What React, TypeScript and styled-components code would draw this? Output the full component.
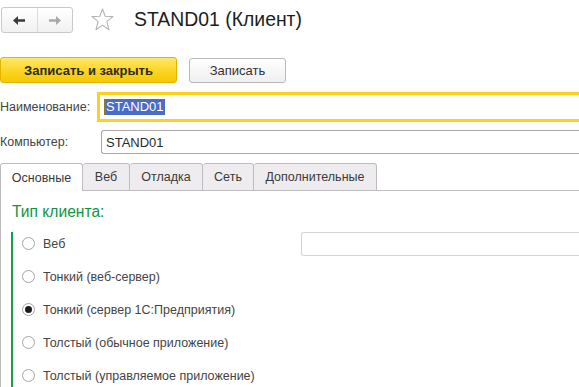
import styled, { createGlobalStyle } from "styled-components";

const GlobalStyle = createGlobalStyle`
  html, body {
    margin: 0;
    padding: 0;
    background: #ffffff;
  }
  body {
    font-family: "Liberation Sans", Arial, sans-serif;
    overflow: hidden;
  }
`;

const tabs = [
  { title: "Основные", width: 83 },
  { title: "Веб", width: 47 },
  { title: "Отладка", width: 73 },
  { title: "Сеть", width: 51 },
  { title: "Дополнительные", width: 123 },
];

const clientTypes = [
  { label: "Веб", checked: false, withField: true },
  { label: "Тонкий (веб-сервер)", checked: false },
  { label: "Тонкий (сервер 1С:Предприятия)", checked: true },
  { label: "Толстый (обычное приложение)", checked: false },
  { label: "Толстый (управляемое приложение)", checked: false },
];

const ArrowLeft = ({ color }: { color: string }) => (
  <svg width="12" height="9" viewBox="0 0 12 9">
    <path d="M0 4.5 L5 0 L5 3.2 L12 3.2 L12 5.8 L5 5.8 L5 9 Z" fill={color} />
  </svg>
);

const ArrowRight = ({ color }: { color: string }) => (
  <svg width="12" height="9" viewBox="0 0 12 9">
    <path d="M12 4.5 L7 0 L7 3.2 L0 3.2 L0 5.8 L7 5.8 L7 9 Z" fill={color} />
  </svg>
);

const StarIcon = () => (
  <svg width="23" height="23" viewBox="0 0 23 23">
    <path
      d="M11.5 1 L14.2 8.3 L22 8.6 L15.9 13.4 L18 21.8 L11.5 17.1 L5 21.8 L7.1 13.4 L1 8.6 L8.8 8.3 Z"
      fill="none"
      stroke="#b4b4b4"
      strokeWidth="1.1"
      strokeLinejoin="round"
    />
  </svg>
);

export default function App() {
  return (
    <Page>
      <GlobalStyle />
      <Header>
        <NavGroup>
          <NavButton>
            <ArrowLeft color="#3a3a3a" />
          </NavButton>
          <NavButton $divider>
            <ArrowRight color="#a8a8a8" />
          </NavButton>
        </NavGroup>
        <StarBox>
          <StarIcon />
        </StarBox>
        <Title>STAND01 (Клиент)</Title>
      </Header>

      <Toolbar>
        <PrimaryButton>Записать и закрыть</PrimaryButton>
        <Button>Записать</Button>
      </Toolbar>

      <FormRow $focused>
        <Label $width={97}>Наименование:</Label>
        <FocusFrame>
          <Field $plain>
            <Selected>STAND01</Selected>
          </Field>
        </FocusFrame>
      </FormRow>

      <FormRow>
        <Label $width={101}>Компьютер:</Label>
        <Field>STAND01</Field>
      </FormRow>

      <TabBar>
        {tabs.map((t, i) => (
          <Tab key={t.title} $active={i === 0} $width={t.width}>
            {t.title}
          </Tab>
        ))}
        <TabFill />
      </TabBar>

      <TabPanel>
        <GroupTitle>Тип клиента:</GroupTitle>
        <RadioGroup>
          {clientTypes.map((c) => (
            <RadioRow key={c.label}>
              <Radio $checked={c.checked} />
              <RadioLabel>{c.label}</RadioLabel>
              {c.withField && <SideField />}
            </RadioRow>
          ))}
        </RadioGroup>
      </TabPanel>
    </Page>
  );
}

const Page = styled.div`
  width: 579px;
  height: 387px;
  overflow: hidden;
  color: #444444;
  font-size: 12.5px;
`;

const Header = styled.div`
  display: flex;
  align-items: center;
  height: 26px;
  margin-top: 7px;
  padding-left: 1px;
`;

const NavGroup = styled.div`
  display: flex;
  width: 72px;
  height: 26px;
  box-sizing: border-box;
  border: 1px solid #c9c9c9;
  border-radius: 3px;
  background: linear-gradient(#ffffff, #f1f1f1);
`;

const NavButton = styled.div<{ $divider?: boolean }>`
  flex: 1;
  display: flex;
  align-items: center;
  justify-content: center;
  border-left: ${({ $divider }) => ($divider ? "1px solid #dcdcdc" : "none")};
`;

const StarBox = styled.div`
  display: flex;
  margin-left: 18px;
  margin-top: -2px;
`;

const Title = styled.div`
  margin-left: 20px;
  font-size: 19.4px;
  color: #1e1e1e;
  margin-top: -1px;
`;

const Toolbar = styled.div`
  display: flex;
  gap: 12px;
  margin-top: 24px;
  height: 26px;
`;

const PrimaryButton = styled.div`
  width: 177px;
  box-sizing: border-box;
  border: 1px solid #e3b400;
  border-radius: 3px;
  background: linear-gradient(#ffe768, #fbd524 55%, #f5c800);
  color: #2b2b2b;
  font-weight: bold;
  font-size: 13px;
  display: flex;
  align-items: center;
  justify-content: center;
`;

const Button = styled.div`
  width: 97px;
  margin-top: 1px;
  height: 25px;
  box-sizing: border-box;
  border: 1px solid #b9b9b9;
  border-radius: 3px;
  background: linear-gradient(#ffffff, #f0eff0);
  color: #333;
  font-size: 13px;
  display: flex;
  align-items: center;
  justify-content: center;
`;

const FormRow = styled.div<{ $focused?: boolean }>`
  display: flex;
  align-items: center;
  margin-top: ${({ $focused }) => ($focused ? "9px" : "8px")};
  height: ${({ $focused }) => ($focused ? "30px" : "24px")};
`;

const Label = styled.div<{ $width: number }>`
  width: ${({ $width }) => $width}px;
  flex-shrink: 0;
  color: #444444;
`;

const FocusFrame = styled.div`
  flex: 1;
  height: 30px;
  box-sizing: border-box;
  border: 3px solid #fdd21c;
  border-right: none;
  display: flex;
  padding: 0 0 0 4px;
  align-items: center;
`;

const Field = styled.div<{ $plain?: boolean }>`
  flex: 1;
  height: ${({ $plain }) => ($plain ? "20px" : "24px")};
  box-sizing: border-box;
  border: ${({ $plain }) => ($plain ? "none" : "1px solid #a9a9a9")};
  border-right: none;
  border-radius: 3px 0 0 3px;
  display: flex;
  align-items: center;
  padding-left: ${({ $plain }) => ($plain ? "0" : "4px")};
  color: #2a2a2a;
  font-size: 13px;
`;

const Selected = styled.span`
  background: #4a6bc7;
  color: #ffffff;
  border-left: 2px solid #8a7a20;
  line-height: 16px;
  padding-right: 1px;
`;

const TabBar = styled.div`
  display: flex;
  margin-top: 9px;
  height: 28px;
`;

const Tab = styled.div<{ $active?: boolean; $width: number }>`
  box-sizing: border-box;
  width: ${({ $width }) => $width}px;
  height: 28px;
  display: flex;
  align-items: center;
  justify-content: center;
  font-size: 12.5px;
  color: #3a3a3a;
  border: 1px solid #bdbdbd;
  border-left: ${({ $active }) => ($active ? "1px solid #bdbdbd" : "none")};
  border-bottom: ${({ $active }) => ($active ? "none" : "1px solid #bdbdbd")};
  border-radius: 3px 3px 0 0;
  background: ${({ $active }) => ($active ? "#ffffff" : "#efecef")};
`;

const TabFill = styled.div`
  flex: 1;
  border-bottom: 1px solid #bdbdbd;
`;

const TabPanel = styled.div`
  border-left: 1px solid #bdbdbd;
  padding: 11px 0 0 10px;
  height: 300px;
`;

const GroupTitle = styled.div`
  font-size: 15.6px;
  color: #0f9640;
  line-height: 20px;
  padding-left: 1px;
`;

const RadioGroup = styled.div`
  margin-top: 10px;
  border-left: 2px solid #13a049;
  padding-left: 9px;
  display: flex;
  flex-direction: column;
`;

const RadioRow = styled.div`
  display: flex;
  align-items: center;
  height: 33px;
  &:first-child {
    margin-top: -5px;
  }
`;

const Radio = styled.div<{ $checked?: boolean }>`
  width: 13px;
  height: 13px;
  box-sizing: border-box;
  border: 1px solid #a6a6a6;
  border-radius: 50%;
  background: radial-gradient(circle, #ffffff 60%, #f2f2f2);
  display: flex;
  align-items: center;
  justify-content: center;
  flex-shrink: 0;
  &::after {
    content: "";
    display: ${({ $checked }) => ($checked ? "block" : "none")};
    width: 7px;
    height: 7px;
    border-radius: 50%;
    background: #1c1c1c;
  }
`;

const RadioLabel = styled.div`
  margin-left: 8px;
  font-size: 12.5px;
  color: #444444;
  white-space: nowrap;
`;

const SideField = styled.div`
  margin-left: auto;
  width: 279px;
  height: 24px;
  box-sizing: border-box;
  border: 1px solid #d4d4d4;
  border-right: none;
  border-radius: 3px 0 0 3px;
  margin-right: -1px;
`;
